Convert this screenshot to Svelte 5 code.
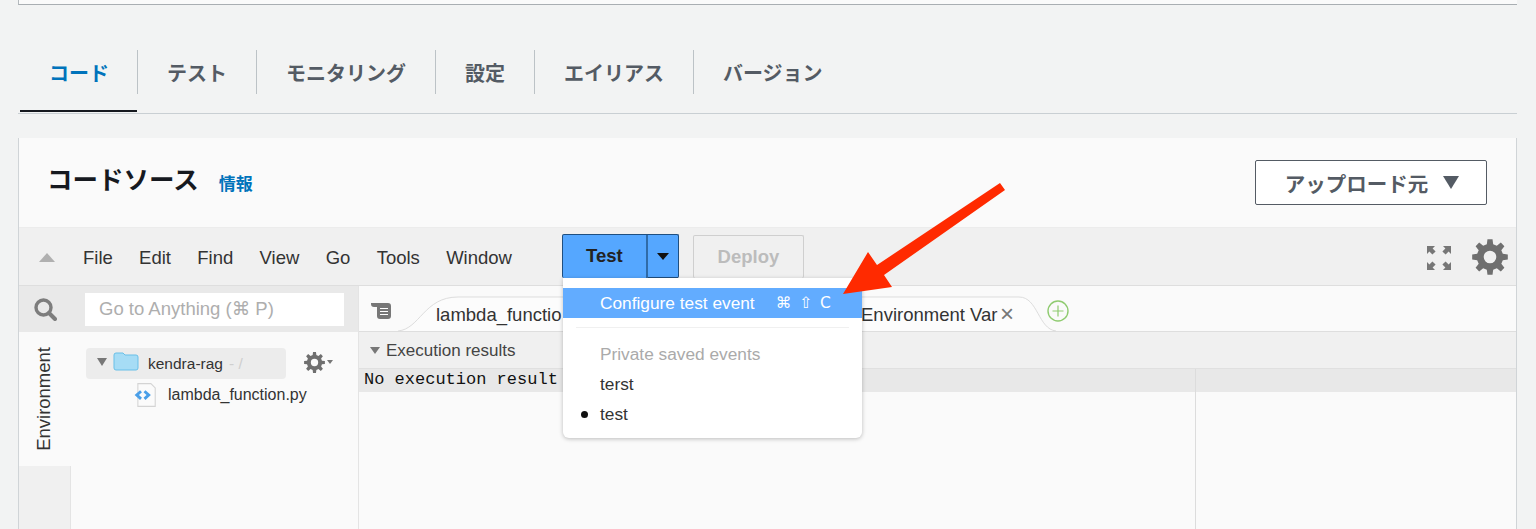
<script>
	const tabs = ['コード', 'テスト', 'モニタリング', '設定', 'エイリアス', 'バージョン'];
	const menus = ['File', 'Edit', 'Find', 'View', 'Go', 'Tools', 'Window'];

	// 8 tooth gear centred on 12,12
	function gearPath(outer, inner, hole) {
		const teeth = 8;
		const pts = [];
		for (let i = 0; i < teeth; i++) {
			const a = (i / teeth) * Math.PI * 2;
			const w = Math.PI / teeth;
			const steps = [
				[inner, a - w * 0.62],
				[outer, a - w * 0.36],
				[outer, a + w * 0.36],
				[inner, a + w * 0.62]
			];
			for (const [r, t] of steps) {
				pts.push(`${(12 + r * Math.cos(t)).toFixed(2)} ${(12 + r * Math.sin(t)).toFixed(2)}`);
			}
		}
		const ring = `M${12 - hole} 12a${hole} ${hole} 0 1 0 ${hole * 2} 0a${hole} ${hole} 0 1 0 ${-hole * 2} 0z`;
		return `M${pts.join('L')}z${ring}`;
	}

	const gear = gearPath(12, 8.8, 4.2);
</script>

<div class="page">
	<div class="top-card"></div>

	<nav class="tabs">
		{#each tabs as tab, i}
			<div class="tab" class:active={i === 0}>{tab}</div>
		{/each}
	</nav>

	<section class="panel">
		<header class="panel-head">
			<div class="title-wrap">
				<h2>コードソース</h2>
				<span class="info">情報</span>
			</div>
			<button class="upload">アップロード元<span class="upload-caret"></span></button>
		</header>

		<div class="ide">
			<div class="menubar">
				<span class="collapse"></span>
				<div class="menus">
					{#each menus as m}<span>{m}</span>{/each}
				</div>
				<div class="test-btn">
					<span class="test-main">Test</span>
					<span class="test-drop"><i></i></span>
				</div>
				<div class="deploy">Deploy</div>
				<div class="menu-right">
					<svg class="expand" viewBox="0 0 24 24" width="24" height="24" fill="#777">
						<path d="M0 0h8L5.6 2.4 8.6 5.4 5.4 8.6 2.4 5.6 0 8zM24 0h-8l2.4 2.4-3 3 3.2 3.2 3-3L24 8zM0 24h8l-2.4-2.4 3-3-3.2-3.2-3 3L0 16zM24 24h-8l2.4-2.4-3-3 3.2-3.2 3 3L24 16z" />
					</svg>
					<svg class="big-gear" viewBox="0 0 24 24" width="36" height="36">
						<path d={gear} fill="#6f6f6f" fill-rule="evenodd" />
					</svg>
				</div>
			</div>

			<div class="workspace">
				<aside class="left">
					<div class="search-row">
						<svg viewBox="0 0 24 24" width="24" height="24" fill="none" stroke="#7d7d7d">
							<circle cx="10.5" cy="10.5" r="7.5" stroke-width="3.4" />
							<path d="M16 16l6 6" stroke-width="4" stroke-linecap="round" />
						</svg>
						<div class="go-input">Go to Anything (⌘ P)</div>
					</div>
					<div class="left-body">
						<div class="side-tabs">
							<div class="env-tab"><span>Environment</span></div>
							<div class="side-rest"></div>
						</div>
						<div class="tree">
							<div class="root-row">
								<div class="root-sel">
									<span class="tri"></span>
									<svg viewBox="0 0 26 20" width="26" height="20">
										<path d="M1 4a2 2 0 0 1 2-2h7l2 2h11a2 2 0 0 1 2 2v11a2 2 0 0 1-2 2H3a2 2 0 0 1-2-2z" fill="#a6dcf5" stroke="#68bfe8" />
									</svg>
									<span class="root-name">kendra-rag</span>
									<span class="root-path">- /</span>
								</div>
								<svg class="tree-gear" viewBox="0 0 24 24" width="21" height="21">
									<path d={gear} fill="#6f6f6f" fill-rule="evenodd" />
								</svg>
								<span class="gear-caret"></span>
							</div>
							<div class="file-row">
								<svg viewBox="0 0 24 24" width="26" height="26">
									<path d="M4.500 1.500h12l4 4v17h-16z" fill="#fbfbfb" stroke="#d4d4d4" />
									<path d="M6.500 7.500L1.500 12l5 4.500 1.800-2L5.500 12l2.800-2.500zM11.500 7.500l5 4.500-5 4.500-1.800-2 2.800-2.500-2.800-2.500z" fill="#4a9fe8" />
								</svg>
								<span>lambda_function.py</span>
							</div>
						</div>
					</div>
				</aside>

				<div class="right">
					<div class="tabbar">
						<svg class="tab-outline" viewBox="0 0 660 46" width="660" height="46" fill="none">
							<path d="M0 45C22 43 26 11 60 11H621C640 11 640 43 658 45" fill="#fcfcfc" stroke="#dddddd" />
						</svg>
						<svg class="tab-list" viewBox="0 0 20 16" width="20" height="16">
							<path d="M0 0h17a3 3 0 0 1 3 3v10a3 3 0 0 1-3 3H9a3 3 0 0 1-3-3V4H3a3 3 0 0 1-3-3z" fill="#777" />
							<path d="M9 5.500h8M9 8.500h8M9 11.500h8" stroke="#fff" stroke-width="1.200" />
						</svg>
						<span class="file-tab first">lambda_functio</span>
						<span class="file-tab second">Environment Var</span>
						<span class="close">×</span>
						<svg class="add" viewBox="0 0 22 22" width="22" height="22" fill="none" stroke="#8fcb70">
							<circle cx="11" cy="11" r="10" stroke-width="1.400" />
							<path d="M11 5.500v11M5.500 11h11" stroke-width="1.200" />
						</svg>
					</div>
					<div class="exec-head"><span class="tri small"></span>Execution results</div>
					<div class="exec-row">
						<span class="exec-col">No execution result</span>
						<span class="exec-col2"></span>
					</div>
					<div class="exec-body">
						<span class="exec-col"></span>
						<span class="exec-col2"></span>
					</div>
				</div>
			</div>
		</div>
	</section>

	<div class="dropdown">
		<div class="dd-item hl"><span>Configure test event</span><span class="keys">⌘ ⇧ C</span></div>
		<div class="dd-sep"></div>
		<div class="dd-label">Private saved events</div>
		<div class="dd-item">terst</div>
		<div class="dd-item picked">test</div>
	</div>

	<svg class="arrow" viewBox="0 0 1536 529" width="1536" height="529">
		<path d="M1000 183L1005 190L884 275L892 287L843 294L868 252L877 265Z" fill="#ff2a00" />
	</svg>
</div>

<style>
	:global(body) {
		margin: 0;
		background: #f2f3f3;
	}

	.page {
		position: relative;
		width: 1536px;
		height: 529px;
		overflow: hidden;
		background: #f2f3f3;
		font-family: 'Liberation Sans', 'Noto Sans CJK JP', sans-serif;
		color: #333;
	}

	.top-card {
		height: 4px;
		margin: 0 19px 0 18px;
		background: #fafafa;
		border-left: 1px solid #b4b9bd;
		border-bottom: 1px solid #a9aeb2;
	}

	.tabs {
		display: flex;
		margin: 45px 19px 0 18px;
		height: 63px;
		border-bottom: 1px solid #c9cfd3;
	}

	.tab {
		height: 44px;
		padding: 0 29px;
		border-right: 1px solid #bcc2c6;
		font-family: 'Noto Sans CJK JP', sans-serif;
		font-size: 20px;
		font-weight: 700;
		line-height: 46px;
		color: #545b64;
	}

	.tab:last-child {
		border-right: none;
	}

	.tab.active {
		position: relative;
		color: #0073bb;
		margin-left: 2px;
		padding-right: 28px;
	}

	.tab.active::after {
		content: '';
		position: absolute;
		left: 0;
		right: 0;
		top: 60px;
		height: 2px;
		background: #16191f;
	}

	.panel {
		margin: 24px 19px 0 18px;
		height: 392px;
		background: #fafafa;
		border-left: 1px solid #d0d4d7;
		border-right: 1px solid #d0d4d7;
		box-sizing: border-box;
	}

	.panel-head {
		height: 90px;
		box-sizing: border-box;
		padding: 22px 29px 0 28px;
		display: flex;
		justify-content: space-between;
		align-items: flex-start;
	}

	.title-wrap {
		display: flex;
		align-items: baseline;
		gap: 20px;
		margin-top: -1px;
	}

	h2 {
		margin: 0;
		font-family: 'Noto Sans CJK JP', sans-serif;
		font-size: 25.500px;
		font-weight: 700;
		line-height: 38px;
		color: #16191f;
	}

	.info {
		position: relative;
		top: 1px;
		font-family: 'Noto Sans CJK JP', sans-serif;
		font-size: 17px;
		font-weight: 700;
		color: #0073bb;
	}

	.upload {
		width: 232px;
		height: 45px;
		display: flex;
		align-items: center;
		justify-content: center;
		gap: 15px;
		background: #fff;
		border: 1px solid #545b64;
		border-radius: 2px;
		font-family: 'Noto Sans CJK JP', sans-serif;
		font-size: 20.500px;
		font-weight: 700;
		color: #545b64;
		padding: 0 0 0 2px;
	}

	.upload-caret {
		width: 0;
		height: 0;
		border-left: 8px solid transparent;
		border-right: 8px solid transparent;
		border-top: 13px solid #545b64;
	}

	.ide {
		height: 302px;
		display: flex;
		flex-direction: column;
	}

	.menubar {
		height: 57px;
		flex: none;
		display: flex;
		align-items: flex-start;
		background: #f0f0f0;
		border-top: 1px solid #ececec;
		border-bottom: 1px solid #dedede;
		box-sizing: content-box;
		margin-top: -1px;
		position: relative;
	}

	.collapse {
		margin: 25px 0 0 20px;
		width: 0;
		height: 0;
		border-left: 8px solid transparent;
		border-right: 8px solid transparent;
		border-bottom: 9px solid #b0b0b0;
	}

	.menus {
		display: flex;
		gap: 26.300px;
		margin: 19px 0 0 28px;
		font-size: 18.500px;
		line-height: 21px;
		color: #333;
	}

	.test-btn {
		display: flex;
		margin: 6px 0 0 50px;
		height: 44px;
		width: 117px;
		box-sizing: border-box;
		background: #55a7ff;
		border: 1px solid #1f4f80;
		border-bottom: none;
		border-radius: 2px;
		font-size: 18.500px;
		font-weight: 700;
		color: #222;
	}

	.test-main {
		width: 83px;
		text-align: center;
		line-height: 42px;
		border-right: 2px solid #2f6ba8;
	}

	.test-drop {
		flex: 1;
		display: flex;
		align-items: center;
		justify-content: center;
		border-bottom: 1px solid #1f4f80;
	}

	.test-drop i {
		width: 0;
		height: 0;
		border-left: 6px solid transparent;
		border-right: 6px solid transparent;
		border-top: 7px solid #111;
	}

	.deploy {
		margin: 7px 0 0 14px;
		width: 111px;
		height: 43px;
		box-sizing: border-box;
		border: 1px solid #cfcfcf;
		border-bottom: none;
		border-radius: 2px;
		text-align: center;
		font-size: 18.500px;
		font-weight: 700;
		line-height: 42px;
		color: #bcbcbc;
	}

	.menu-right {
		margin-left: auto;
		display: flex;
		align-items: flex-start;
		padding-right: 8px;
		gap: 21px;
	}

	.expand {
		margin-top: 18px;
	}

	.big-gear {
		margin-top: 11px;
	}

	.workspace {
		flex: 1;
		display: flex;
		min-height: 0;
	}

	.left {
		width: 339px;
		flex: none;
		display: flex;
		flex-direction: column;
		border-right: 1px solid #e4e4e4;
		box-sizing: content-box;
	}

	.search-row {
		height: 46px;
		flex: none;
		display: flex;
		align-items: center;
		background: #e9e9e9;
		padding-left: 14px;
	}

	.go-input {
		margin-left: 28px;
		width: 245px;
		height: 33px;
		padding-left: 14px;
		background: #fff;
		font-family: 'Liberation Sans', 'DejaVu Sans', sans-serif;
		font-size: 18.500px;
		line-height: 31px;
		color: #aeaeae;
	}

	.left-body {
		flex: 1;
		display: flex;
		min-height: 0;
	}

	.side-tabs {
		width: 52px;
		flex: none;
		display: flex;
		flex-direction: column;
	}

	.env-tab {
		height: 134px;
		display: flex;
		justify-content: center;
		align-items: center;
		padding-right: 2px;
		background: #fafafa;
	}

	.env-tab span {
		writing-mode: vertical-rl;
		transform: rotate(180deg);
		font-size: 18.500px;
		color: #333;
	}

	.side-rest {
		flex: 1;
		background: #f0f0f0;
		border-right: 1px solid #e4e4e4;
	}

	.tree {
		flex: 1;
		padding: 16px 0 0 15px;
	}

	.root-row {
		display: flex;
		align-items: center;
	}

	.root-sel {
		width: 200px;
		height: 31px;
		display: flex;
		align-items: center;
		background: #ececec;
		border-radius: 4px;
		box-sizing: border-box;
		padding-left: 11px;
	}

	.tri {
		width: 0;
		height: 0;
		margin: -3px 6px 0 0;
		border-left: 5.500px solid transparent;
		border-right: 5.500px solid transparent;
		border-top: 8px solid #777;
	}

	.tri.small {
		margin: 0 6px 0 0;
		border-top-width: 7px;
	}

	.root-sel svg {
		margin-top: -6px;
	}

	.root-name {
		margin-left: 9px;
		font-size: 15.500px;
		color: #333;
	}

	.root-path {
		margin-left: 6px;
		font-size: 15.500px;
		color: #cfcfcf;
	}

	.tree-gear {
		margin-left: 18px;
		margin-top: -3px;
	}

	.gear-caret {
		width: 0;
		height: 0;
		margin: -3px 0 0 2px;
		border-left: 3.500px solid transparent;
		border-right: 3.500px solid transparent;
		border-top: 4px solid #777;
	}

	.file-row {
		display: flex;
		align-items: center;
		gap: 9px;
		margin: 3px 0 0 47px;
		font-size: 16px;
		color: #333;
	}

	.right {
		flex: 1;
		min-width: 0;
		display: flex;
		flex-direction: column;
	}

	.tabbar {
		position: relative;
		height: 46px;
		flex: none;
		background: #fafafa;
		border-bottom: 1px solid #dedede;
		box-sizing: border-box;
		font-size: 18.500px;
		color: #333;
	}

	.tab-outline {
		position: absolute;
		left: 39px;
		top: 0;
	}

	.tab-list {
		position: absolute;
		left: 12px;
		top: 17px;
	}

	.file-tab {
		position: absolute;
		top: 18px;
		white-space: nowrap;
	}

	.first {
		left: 77px;
	}

	.second {
		left: 502px;
	}

	.close {
		position: absolute;
		left: 641px;
		top: 14px;
		font-size: 24px;
		color: #777;
	}

	.add {
		position: absolute;
		left: 688px;
		top: 14px;
	}

	.exec-head {
		height: 36px;
		flex: none;
		box-sizing: border-box;
		padding: 1px 0 0 11px;
		display: flex;
		align-items: center;
		background: #f0f0f0;
		font-size: 17px;
		color: #444;
	}

	.exec-row {
		height: 24px;
		flex: none;
		display: flex;
		background: #e8e8e8;
		border-top: 1px solid #e0e0e0;
		box-sizing: border-box;
	}

	.exec-col {
		width: 831px;
		flex: none;
		padding-left: 5px;
		border-right: 1px solid #dcdcdc;
		font-family: 'Liberation Mono', monospace;
		font-size: 17px;
		line-height: 22px;
		color: #111;
		white-space: nowrap;
		overflow: hidden;
	}

	.exec-col2 {
		flex: 1;
	}

	.exec-body {
		flex: 1;
		display: flex;
		background: #fafafa;
	}

	.dropdown {
		position: absolute;
		left: 563px;
		top: 278px;
		width: 299px;
		height: 160px;
		padding-top: 10px;
		box-sizing: border-box;
		background: #fff;
		border-radius: 0 0 6px 6px;
		box-shadow: 0 1px 4px rgba(0, 0, 0, 0.25);
		font-size: 17.300px;
		color: #333;
	}

	.dd-item {
		position: relative;
		height: 30px;
		line-height: 31px;
		padding-left: 37px;
	}

	.dd-item.hl {
		display: flex;
		background: #62acff;
		color: #fff;
	}

	.keys {
		margin-left: 21px;
		letter-spacing: 1.500px;
		font-family: 'DejaVu Sans', sans-serif;
		font-size: 15.500px;
	}

	.dd-sep {
		height: 1px;
		margin: 9px 13px 0;
		background: #f0f0f0;
	}

	.dd-label {
		height: 30px;
		margin-top: 11px;
		line-height: 30px;
		padding-left: 37px;
		color: #aaa;
	}

	.dd-item.picked::before {
		content: '';
		position: absolute;
		left: 18px;
		top: 12px;
		width: 7px;
		height: 7px;
		border-radius: 50%;
		background: #111;
	}

	.arrow {
		position: absolute;
		left: 0;
		top: 0;
		pointer-events: none;
	}
</style>
